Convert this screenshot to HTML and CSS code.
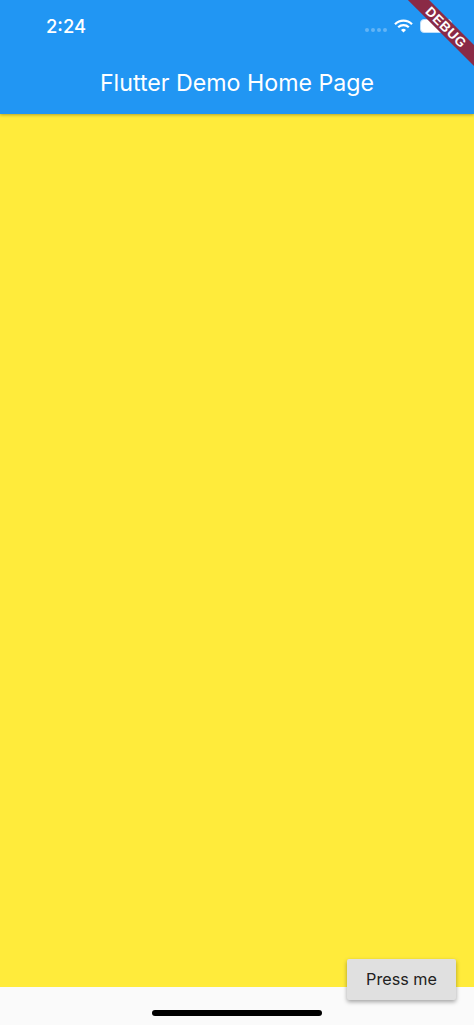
FILE: index.html
```html
<html>

<head>
    <link rel="stylesheet" href="styles.css">
</head>

<body>
    <div class="app">
        <div class="app-bar">
            <div class="status-bar">
                <span class="status-bar__time">2:24</span>
                <div class="status-bar__icons">
                    <div class="signal">
                        <span class="signal__dot"></span>
                        <span class="signal__dot"></span>
                        <span class="signal__dot"></span>
                        <span class="signal__dot"></span>
                    </div>
                    <svg class="wifi" width="19" height="14" viewBox="0 0 19 14">
                        <path d="M1 5.2a12 12 0 0 1 17 0" fill="none" stroke="#fff" stroke-width="2.2" />
                        <path d="M4.2 8.3a7.6 7.6 0 0 1 10.6 0" fill="none" stroke="#fff" stroke-width="2.2" />
                        <path d="M7 11a3.6 3.6 0 0 1 5 0l-2.5 2.6z" fill="#fff" />
                    </svg>
                    <div class="battery"></div>
                </div>
            </div>
            <div class="app-bar__title">Flutter Demo Home Page</div>
        </div>

        <div class="body"></div>

        <div class="home-area">
            <div class="home-indicator"></div>
        </div>

        <button class="press-button">Press me</button>

        <div class="debug-banner">DEBUG</div>
    </div>
</body>

</html>
```

FILE: styles.css
```css
* {
    box-sizing: border-box;
}

html,
body {
    margin: 0;
    padding: 0;
}

.app {
    position: relative;
    display: flex;
    flex-direction: column;
    width: 474px;
    height: 1025px;
    overflow: hidden;
    font-family: Inter, "Liberation Sans", sans-serif;
}

.app-bar {
    position: relative;
    z-index: 2;
    height: 114px;
    background-color: #2196f3;
    box-shadow: 0 1px 3px rgba(0, 0, 0, 0.3);
    color: #fff;
}

.status-bar {
    display: flex;
    justify-content: space-between;
    align-items: center;
    height: 51px;
    padding: 0 22px 0 46px;
}

.status-bar__time {
    font-size: 18.4px;
    font-weight: 500;
    color: #fff;
}

.status-bar__icons {
    display: flex;
    align-items: center;
    gap: 7px;
}

.signal {
    display: flex;
    gap: 2px;
    margin-top: 8px;
}

.signal__dot {
    width: 4px;
    height: 4px;
    border-radius: 50%;
    background-color: #62b4f6;
}

.battery {
    width: 32px;
    height: 14px;
    border: 1.5px solid #bcdffb;
    border-radius: 4px;
    background-color: #fff;
}

.app-bar__title {
    margin-top: 18px;
    text-align: center;
    font-size: 23.2px;
    line-height: 28px;
    color: #fff;
}

.body {
    flex: 1;
    background-color: #ffeb3b;
}

.home-area {
    position: relative;
    height: 38px;
    background-color: #fafafa;
}

.home-indicator {
    width: 170px;
    height: 6px;
    margin: 23px auto 0;
    border-radius: 3px;
    background-color: #000;
}

.press-button {
    position: absolute;
    left: 347px;
    top: 959px;
    width: 109px;
    height: 41px;
    padding: 0 0 2px;
    border: none;
    border-radius: 2px;
    background-color: #e0e0e0;
    box-shadow: 0 2px 4px rgba(0, 0, 0, 0.35);
    font-family: inherit;
    font-size: 16.2px;
    color: #212121;
}

.debug-banner {
    position: absolute;
    z-index: 3;
    top: 19.5px;
    right: -47px;
    width: 150px;
    height: 15px;
    background-color: #8a2a46;
    transform: rotate(45deg);
    text-align: center;
    font-family: "Liberation Sans", sans-serif;
    font-size: 13.5px;
    font-weight: 700;
    line-height: 15px;
    letter-spacing: 0.6px;
    color: #fff;
}
```
